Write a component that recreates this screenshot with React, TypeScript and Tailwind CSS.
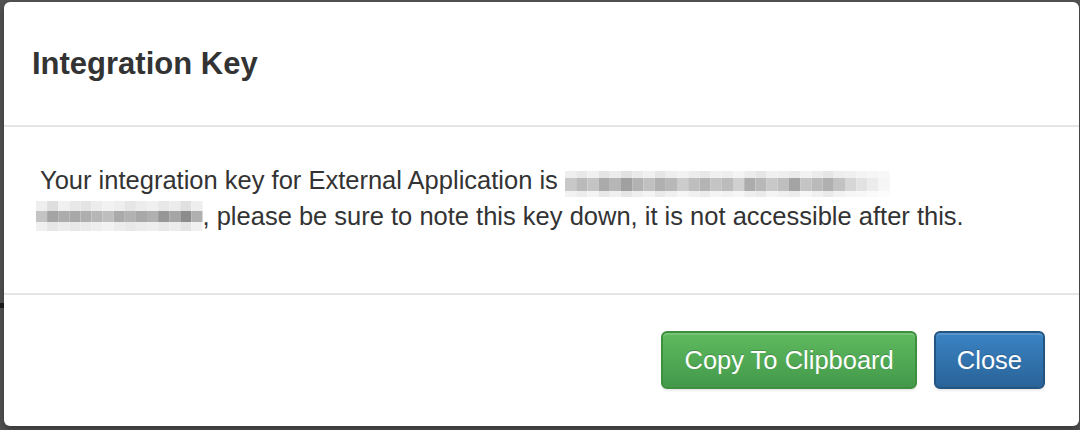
// Bootstrap 3 style "Integration Key" modal, shown at ~1.8x zoom over a dimmed page.
const font = "font-['Liberation_Sans',Arial,Helvetica,sans-serif]";

// Pixelated (redacted) key: three rows of grey cells, the middle row darker.
const line1 = {
  top: [238, 232, 240, 228, 236, 226, 234, 240, 230, 238, 242, 236, 232, 240, 238, 244, 236, 230, 240, 238, 234, 242, 236, 230, 238, 240, 244, 246, 248],
  mid: [200, 186, 196, 170, 182, 160, 178, 192, 176, 184, 204, 190, 180, 196, 188, 208, 172, 184, 200, 190, 164, 196, 186, 176, 194, 214, 226, 236, 246],
  bot: [242, 236, 244, 232, 240, 230, 238, 244, 234, 240, 246, 240, 236, 244, 242, 246, 238, 234, 244, 240, 236, 246, 240, 234, 242, 246, 248, 250, 252],
};
const line2 = {
  top: [238, 222, 240, 232, 228, 236, 242, 238, 230, 236, 240, 232, 236, 224, 238],
  mid: [196, 164, 172, 168, 174, 182, 190, 170, 178, 168, 176, 150, 166, 140, 176],
  bot: [240, 230, 236, 232, 234, 238, 242, 236, 232, 236, 238, 232, 236, 228, 240],
};

type Rows = { top: number[]; mid: number[]; bot: number[] };

function Redacted({ rows, heights, cell, className }: { rows: Rows; heights: [number, number, number]; cell: number; className?: string }) {
  const w = rows.mid.length * cell;
  const h = heights[0] + heights[1] + heights[2];
  const grey = (v: number) => `rgb(${v},${v},${v})`;
  const band = (vals: number[], y: number, hh: number) =>
    vals.map((v, i) => <rect key={`${y}-${i}`} x={i * cell} y={y} width={cell} height={hh} fill={grey(v)} />);
  return (
    <svg width={w} height={h} viewBox={`0 0 ${w} ${h}`} className={className}>
      {band(rows.top, 0, heights[0])}
      {band(rows.mid, heights[0], heights[1])}
      {band(rows.bot, heights[0] + heights[1], heights[2])}
    </svg>
  );
}

export default function App() {
  return (
    <div className={`flex h-[430px] w-[1080px] overflow-hidden bg-[#535353] pt-[2px] ${font}`}>
      <div className="flex w-[4px] shrink-0 flex-col">
        <div className="h-[301px]" />
        <div className="h-[5px] bg-[#1e1e1e]" />
      </div>

      <div className="flex h-[424px] w-[1075px] shrink-0 flex-col rounded-[6px] bg-white shadow-[0_4px_10px_rgba(0,0,0,0.35)]">
        <header className="flex h-[125px] items-center border-b-2 border-[#e5e5e5] px-[28px] pb-[1px]">
          <h4 className="text-[31px] leading-[35px] font-bold text-[#333]">Integration Key</h4>
        </header>

        <div className="h-[168px] border-b-2 border-[#e5e5e5] px-[36px] pt-[35px]">
          <p className="text-[25.5px] leading-[36px] text-[#333]">
            Your integration key for External Application is{' '}
            <Redacted rows={line1} heights={[7, 13, 6]} cell={11.2} className="inline-block align-[-8px]" />
            <br />
            <Redacted rows={line2} heights={[10, 11, 9]} cell={11.1} className="-ml-[4px] inline-block align-[-6px]" />
            , please be sure to note this key down, it is not accessible after this.
          </p>
        </div>

        <footer className="flex flex-1 items-start justify-end gap-[17px] px-[34px] pt-[36px]">
          <button className="h-[58px] rounded-[6px] border-2 border-[#3e8f3e] bg-linear-to-b from-[#5fba5f] to-[#43994a] px-[21px] text-[25.5px] leading-[36px] text-white shadow-[inset_0_2px_0_rgba(255,255,255,0.15),0_2px_2px_rgba(0,0,0,0.08)] [text-shadow:0_-1px_0_rgba(0,0,0,0.2)]">
            Copy To Clipboard
          </button>
          <button className="h-[58px] rounded-[6px] border-2 border-[#245580] bg-linear-to-b from-[#3a84c4] to-[#2a6398] px-[21px] text-[25.5px] leading-[36px] text-white shadow-[inset_0_2px_0_rgba(255,255,255,0.15),0_2px_2px_rgba(0,0,0,0.08)] [text-shadow:0_-1px_0_rgba(0,0,0,0.2)]">
            Close
          </button>
        </footer>
      </div>
    </div>
  );
}
